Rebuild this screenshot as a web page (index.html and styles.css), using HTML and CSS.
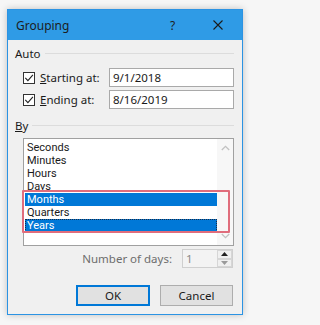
FILE: index.html
```html
<!DOCTYPE html>
<html lang="en">
<head>
<meta charset="utf-8">
<title>Grouping</title>
<link rel="stylesheet" href="styles.css">
</head>
<body>
<div class="dialog">
  <div class="titlebar">
    <span class="title">Grouping</span>
    <span class="help">?</span>
    <svg class="close" width="10" height="10" viewBox="0 0 10 10"><path d="M0.5 0.5L9.5 9.5M9.5 0.5L0.5 9.5" stroke="#1b1b1b" stroke-width="1.1" fill="none"/></svg>
  </div>
  <div class="content">
    <div class="legend legend-auto"><span>Auto</span></div>
    <div class="field-row">
      <span class="check"><svg width="10" height="10" viewBox="0 0 10 10"><path d="M1.3 4.8L3.9 7.6L8.9 1.8" stroke="#222" stroke-width="1.1" fill="none"/></svg></span>
      <span class="field-label"><u>S</u>tarting at:</span>
      <div class="textbox">9/1/2018</div>
    </div>
    <div class="field-row second">
      <span class="check"><svg width="10" height="10" viewBox="0 0 10 10"><path d="M1.3 4.8L3.9 7.6L8.9 1.8" stroke="#222" stroke-width="1.1" fill="none"/></svg></span>
      <span class="field-label"><u>E</u>nding at:</span>
      <div class="textbox">8/16/2019</div>
    </div>
    <div class="legend legend-by"><span><u>B</u>y</span></div>
    <div class="listbox">
      <ul class="items">
        <li>Seconds</li>
        <li>Minutes</li>
        <li>Hours</li>
        <li>Days</li>
        <li class="selected">Months</li>
        <li>Quarters</li>
        <li class="selected focused">Years</li>
      </ul>
      <div class="scrollbar">
        <svg class="chev" width="9" height="6" viewBox="0 0 9 6"><path d="M0.8 5L4.5 1.3L8.2 5" stroke="#c2c2c2" stroke-width="1.3" fill="none"/></svg>
        <svg class="chev" width="9" height="6" viewBox="0 0 9 6"><path d="M0.8 1L4.5 4.7L8.2 1" stroke="#c2c2c2" stroke-width="1.3" fill="none"/></svg>
      </div>
      <div class="highlight-frame"></div>
    </div>
    <div class="days-row">
      <span class="days-label">Number of days:</span>
      <div class="spinner">
        <span class="spin-value">1</span>
        <div class="spin-buttons">
          <span class="spin-btn"><svg width="7" height="4" viewBox="0 0 7 4"><path d="M0 4L3.5 0L7 4Z" fill="#222"/></svg></span>
          <span class="spin-btn"><svg width="7" height="4" viewBox="0 0 7 4"><path d="M0 0L3.5 4L7 0Z" fill="#9a9a9a"/></svg></span>
        </div>
      </div>
    </div>
    <div class="buttons">
      <button class="btn default">OK</button>
      <button class="btn">Cancel</button>
    </div>
  </div>
</div>
</body>
</html>
```

FILE: styles.css
```css
* { box-sizing: border-box; }
html, body { margin: 0; padding: 0; }
body {
  background: #f6f6f6;
  font-family: "Noto Sans", "Open Sans", sans-serif;
  font-size: 11.5px;
  color: #1a1a1a;
  padding: 9px 0 0 7px;
  width: 249px;
  height: 325px;
  overflow: hidden;
}
.dialog {
  width: 236px;
  height: 306px;
  border: 1px solid #2b93e3;
  background: #f0f0f0;
  box-shadow: 0 0 7px rgba(0,0,0,0.22);
  display: flex;
  flex-direction: column;
}
.titlebar {
  height: 30px;
  background: #2f9be6;
  display: flex;
  align-items: center;
  padding-left: 8px;
  color: #1d1d1d;
  font-size: 12px;
}
.title { flex: 1; }
.help { width: 6px; margin-right: 37px; font-size: 12px; }
.close { margin-right: 19px; }
.content {
  flex: 1;
  padding: 6px 8px 8px 7px;
  display: flex;
  flex-direction: column;
}
.legend {
  height: 15px;
  display: flex;
  align-items: center;
  line-height: 15px;
}
.legend::after {
  content: "";
  flex: 1;
  height: 1px;
  background: #dcdcdc;
  margin-left: 4px;
}
.legend-by { margin-top: 9px; }
.field-row {
  margin-top: 7px;
  height: 19px;
  display: flex;
  align-items: center;
  padding-left: 8px;
}
.field-row.second { margin-top: 3px; }
.check {
  width: 12px;
  height: 12px;
  border: 1px solid #333;
  background: #fff;
  display: flex;
  align-items: center;
  justify-content: center;
  margin-right: 5px;
}
.field-label { flex: 1; }
.textbox {
  width: 125px;
  height: 19px;
  border: 1px solid #a9a9a9;
  background: #fff;
  padding-left: 3px;
  line-height: 17px;
}
.listbox {
  position: relative;
  margin: 5px 0 0 8px;
  height: 108px;
  border: 1px solid #a0a0a0;
  background: #fff;
  display: flex;
}
.items {
  list-style: none;
  margin: 0;
  padding: 2px 0 0 0;
  flex: 1;
  font-family: Roboto, "Noto Sans", sans-serif;
  font-size: 11px;
}
.items li {
  height: 13px;
  line-height: 13px;
  margin: 0 0 0 1px;
  padding-left: 2px;
  white-space: nowrap;
}
.items li.selected {
  background: #0078d7;
  color: #fff;
}
.items li.focused {
  outline: 1px dotted #1a2a44;
  outline-offset: -1px;
}
.scrollbar {
  width: 16px;
  background: #f7f7f7;
  display: flex;
  flex-direction: column;
  justify-content: space-between;
  align-items: center;
  padding: 6px 0 6px 0;
}
.highlight-frame {
  position: absolute;
  left: -2px;
  top: 51px;
  width: 208px;
  height: 43px;
  border: 2px solid #e06d7c;
  border-radius: 1px;
  pointer-events: none;
}
.days-row {
  margin-top: 3px;
  height: 19px;
  display: flex;
  align-items: center;
  justify-content: flex-end;
  padding-right: 1px;
}
.days-label { color: #6d6d6d; margin-right: 10px; }
.spinner {
  width: 51px;
  height: 19px;
  border: 1px solid #cfcfcf;
  background: #f3f3f3;
  display: flex;
  align-items: center;
}
.spin-value { flex: 1; color: #8a8a8a; padding-left: 3px; }
.spin-buttons {
  width: 15px;
  height: 17px;
  display: flex;
  flex-direction: column;
}
.spin-btn {
  flex: 1;
  display: flex;
  align-items: center;
  justify-content: center;
  background: #f0f0f0;
  border: 1px solid #d6d6d6;
}
.buttons {
  margin-top: 17px;
  display: flex;
  justify-content: flex-end;
  padding-right: 1px;
  gap: 10px;
}
.btn {
  font: inherit;
  color: #1a1a1a;
  height: 21px;
  width: 73px;
  background: #e1e1e1;
  border: 1px solid #adadad;
  padding: 0;
  margin: 0;
}
.btn.default {
  width: 74px;
  border: 2px solid #0078d7;
}
```
